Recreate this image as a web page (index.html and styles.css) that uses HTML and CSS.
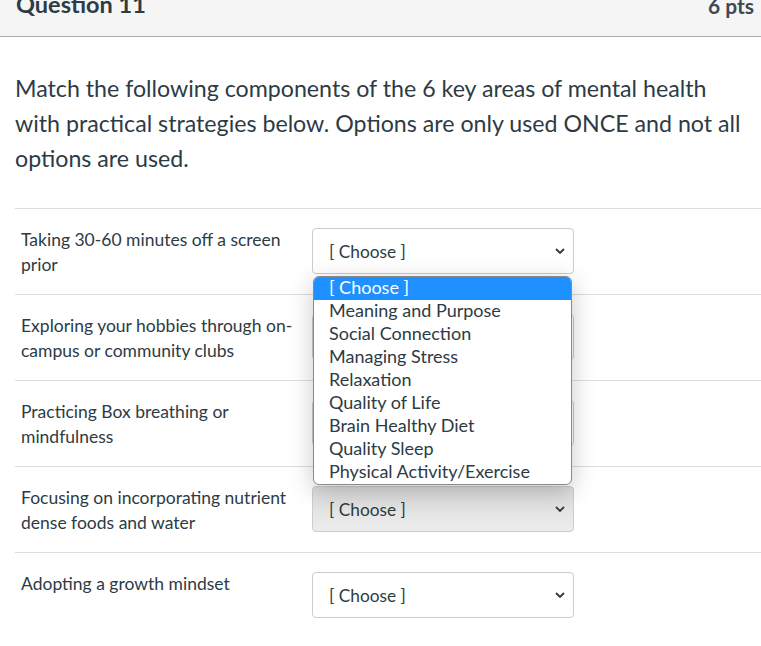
FILE: index.html
```html
<!DOCTYPE html>
<html>
<head>
<meta charset="utf-8">
<link rel="stylesheet" href="styles.css">
</head>
<body>
<div class="question">
  <div class="header">
    <span class="name">Question 11</span>
    <span class="pts">6 pts</span>
  </div>
  <div class="text">Match the following components of the 6 key areas of mental health with practical strategies below. Options are only used ONCE and not all options are used.</div>
  <div class="answers">
    <div class="row">
      <div class="label">Taking 30-60 minutes off a screen prior</div>
      <div class="select"><span>[ Choose ]</span><svg class="chev" width="10" height="6" viewBox="0 0 10 6"><path d="M1 1l4 4 4-4" fill="none" stroke="#2d3b45" stroke-width="1.8"/></svg></div>
    </div>
    <div class="row">
      <div class="label">Exploring your hobbies through on-campus or community clubs</div>
      <div class="select"><span>[ Choose ]</span><svg class="chev" width="10" height="6" viewBox="0 0 10 6"><path d="M1 1l4 4 4-4" fill="none" stroke="#2d3b45" stroke-width="1.8"/></svg></div>
    </div>
    <div class="row">
      <div class="label">Practicing Box breathing or mindfulness</div>
      <div class="select"><span>[ Choose ]</span><svg class="chev" width="10" height="6" viewBox="0 0 10 6"><path d="M1 1l4 4 4-4" fill="none" stroke="#2d3b45" stroke-width="1.8"/></svg></div>
    </div>
    <div class="row">
      <div class="label">Focusing on incorporating nutrient dense foods and water</div>
      <div class="select shaded"><span>[ Choose ]</span><svg class="chev" width="10" height="6" viewBox="0 0 10 6"><path d="M1 1l4 4 4-4" fill="none" stroke="#2d3b45" stroke-width="1.8"/></svg></div>
    </div>
    <div class="row">
      <div class="label">Adopting a growth mindset</div>
      <div class="select"><span>[ Choose ]</span><svg class="chev" width="10" height="6" viewBox="0 0 10 6"><path d="M1 1l4 4 4-4" fill="none" stroke="#2d3b45" stroke-width="1.8"/></svg></div>
    </div>
  </div>
</div>
<ul class="dropdown">
  <li class="sel">[ Choose ]</li>
  <li>Meaning and Purpose</li>
  <li>Social Connection</li>
  <li>Managing Stress</li>
  <li>Relaxation</li>
  <li>Quality of Life</li>
  <li>Brain Healthy Diet</li>
  <li>Quality Sleep</li>
  <li>Physical Activity/Exercise</li>
</ul>
</body>
</html>
```

FILE: styles.css
```css
html, body {
  margin: 0;
  padding: 0;
  background: #fff;
}
body {
  font-family: Lato, "Noto Sans", sans-serif;
  color: #2d3b45;
  overflow: hidden;
}
.header {
  height: 36px;
  background: #f5f5f5;
  border-bottom: 1px solid #a9a9a9;
  display: flex;
  justify-content: space-between;
  align-items: flex-start;
  padding: 0 7px 0 16px;
  overflow: hidden;
}
.name, .pts {
  font-size: 23.5px;
  line-height: 23px;
  font-weight: 700;
  margin-top: -7px;
}
.pts {
  font-size: 21px;
  margin-top: -6px;
  color: #3d4a54;
}
.text {
  font-size: 23.2px;
  line-height: 35px;
  padding: 34px 10px 32px 15px;
}
.answers {
  margin-left: 15px;
}
.row {
  border-top: 1px solid #dddddd;
  height: 85px;
  display: flex;
  align-items: flex-start;
  padding-left: 6px;
}
.label {
  width: 280px;
  font-size: 17.5px;
  line-height: 25px;
  padding-top: 18px;
}
.select {
  margin-left: 11px;
  margin-top: 19px;
  height: 44px;
  border: 1px solid #c7cdd1;
  border-radius: 4px;
  background: #fff;
  display: flex;
  align-items: center;
  justify-content: space-between;
  padding: 0 8px 0 16px;
  box-sizing: content-box;
  font-size: 17.3px;
  width: 236px;
}
.select.shaded {
  background: linear-gradient(#dcdcdc, #ececec);
}
.dropdown {
  position: absolute;
  left: 313px;
  top: 276px;
  width: 257px;
  margin: 0;
  padding: 0;
  list-style: none;
  background: #fff;
  border: 1px solid #8a8a8a;
  border-radius: 6px;
  box-shadow: 0 6px 24px rgba(0,0,0,0.22);
  font-size: 18px;
  line-height: 21px;
  overflow: hidden;
}
.dropdown li {
  padding-left: 15px;
  height: 23px;
}
.dropdown li.sel {
  background: #1e90ff;
  color: #fff;
}
```
